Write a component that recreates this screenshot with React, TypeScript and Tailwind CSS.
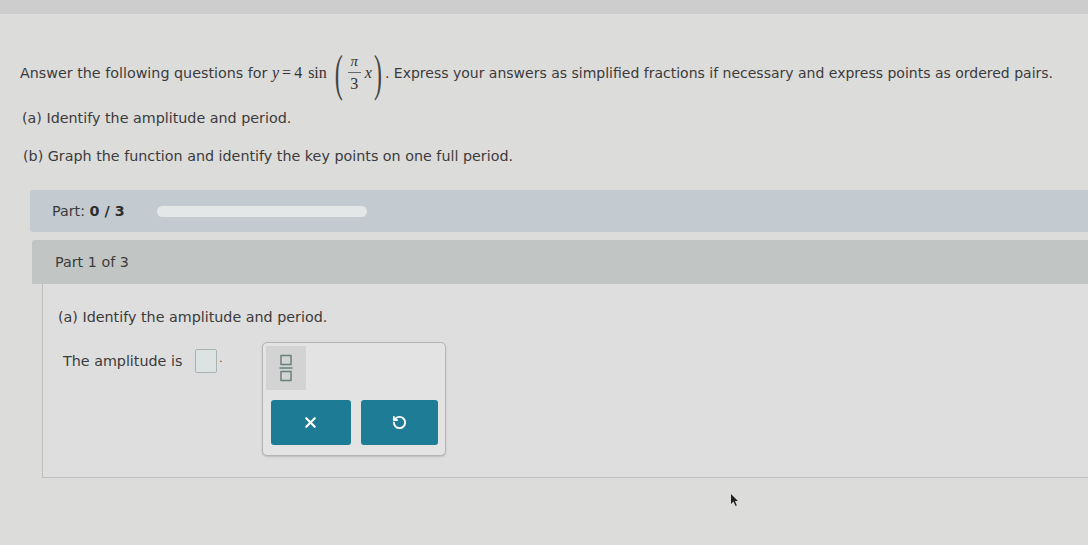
import React from "react";
import { X, RotateCcw } from "lucide-react";

const FractionIcon = () => (
  <svg width="14" height="28" viewBox="0 0 14 28" fill="none">
    <rect x="2" y="1.5" width="10" height="9" stroke="#6a807e" strokeWidth="1.5" />
    <line x1="0.5" y1="14" x2="13.5" y2="14" stroke="#6a807e" strokeWidth="1.5" />
    <rect x="2" y="17.5" width="10" height="9" stroke="#6a807e" strokeWidth="1.5" />
  </svg>
);

const MathExpr = () => (
  <span
    className="inline-flex items-center text-[16px] text-[#333]"
    style={{ fontFamily: '"Liberation Serif", serif' }}
  >
    <span className="italic">y</span>
    <span className="mx-[3px]">=</span>
    <span>4</span>
    <span className="ml-[6px]">sin</span>
    <span className="ml-[8px] inline-block scale-y-[2.1] text-[24px] font-light leading-none text-[#444]">(</span>
    <span className="ml-[5px] mr-[4px] flex flex-col items-center leading-none">
      <span className="pb-[3px] text-[15px] italic">π</span>
      <span className="h-px w-[13px] bg-[#666]" />
      <span className="pt-[3px] text-[16px]">3</span>
    </span>
    <span className="italic">x</span>
    <span className="ml-[2px] inline-block scale-y-[2.1] text-[24px] font-light leading-none text-[#444]">)</span>
  </span>
);

export default function App() {
  return (
    <div
      className="relative h-[545px] w-[1088px] overflow-hidden bg-[#dcdcdb] text-[14.3px] leading-[20px] text-[#3b3b3b]"
      style={{ fontFamily: '"DejaVu Sans", Verdana, sans-serif' }}
    >
      <div className="h-[14px] bg-[#cdcdcd]" />

      <div className="pl-[20px] pt-[38px]">
        <div className="flex h-[42px] items-center">
          <span>Answer the following questions for&nbsp;</span>
          <MathExpr />
          <span className="ml-[3px] text-[14px]">. Express your answers as simplified fractions if necessary and express points as ordered pairs.</span>
        </div>
        <div className="mt-[14px] pl-[2px]">(a) Identify the amplitude and period.</div>
        <div className="mt-[18px] pl-[3px]">(b) Graph the function and identify the key points on one full period.</div>
      </div>

      <div className="ml-[30px] mt-[24px] flex h-[42px] items-center rounded-l-[3px] bg-[#c3cbd1] pl-[22px]">
        <span className="w-[105px]">
          Part: <span className="font-bold text-[#2f2f2f]">0 / 3</span>
        </span>
        <div className="h-[11px] w-[210px] rounded-full bg-[#e4e7e8]" />
      </div>

      <div className="ml-[32px] mt-[8px] flex h-[44px] items-center rounded-tl-[3px] bg-[#c1c6c5] pl-[23px]">
        Part 1 of 3
      </div>

      <div className="ml-[42px] h-[194px] border-b border-l border-[#bdbfbf] bg-[#dedede] pl-[15px] pt-[23px]">
        <div>(a) Identify the amplitude and period.</div>
        <div className="mt-[15px] flex items-start">
          <div className="flex items-center pl-[5px] pt-[7px]">
            <span>The amplitude is</span>
            <span className="ml-[13px] inline-block h-[24px] w-[22px] rounded-[2px] border border-[#a9b2b2] bg-[#dde3e2]" />
            <span className="ml-[2px] self-end pb-[4px] text-[10px]">.</span>
          </div>
          <div className="ml-[39px] flex w-[184px] flex-col rounded-[5px] border border-[#b5b5b5] bg-[#e3e3e3] p-[3px] pb-[10px] shadow-[0_1px_2px_rgba(0,0,0,0.15)]">
            <div className="flex h-[44px] w-[40px] items-center justify-center bg-[#d3d3d3]">
              <FractionIcon />
            </div>
            <div className="mt-[10px] flex gap-[10px] pl-[5px]">
              <button className="flex h-[45px] w-[80px] items-center justify-center rounded-[3px] bg-[#1d7b95] text-white">
                <X size={17} strokeWidth={3} />
              </button>
              <button className="flex h-[45px] w-[77px] items-center justify-center rounded-[3px] bg-[#1e7c96] text-white">
                <RotateCcw size={15} strokeWidth={3} />
              </button>
            </div>
          </div>
        </div>
      </div>

      <svg
        className="absolute left-[730px] top-[493px]"
        width="9"
        height="14"
        viewBox="0 0 9 14"
      >
        <path d="M1 1 L1 11 L3.5 8.5 L5.5 13 L6.8 12.4 L5 8 L8 8 Z" fill="#222" />
      </svg>
    </div>
  );
}
